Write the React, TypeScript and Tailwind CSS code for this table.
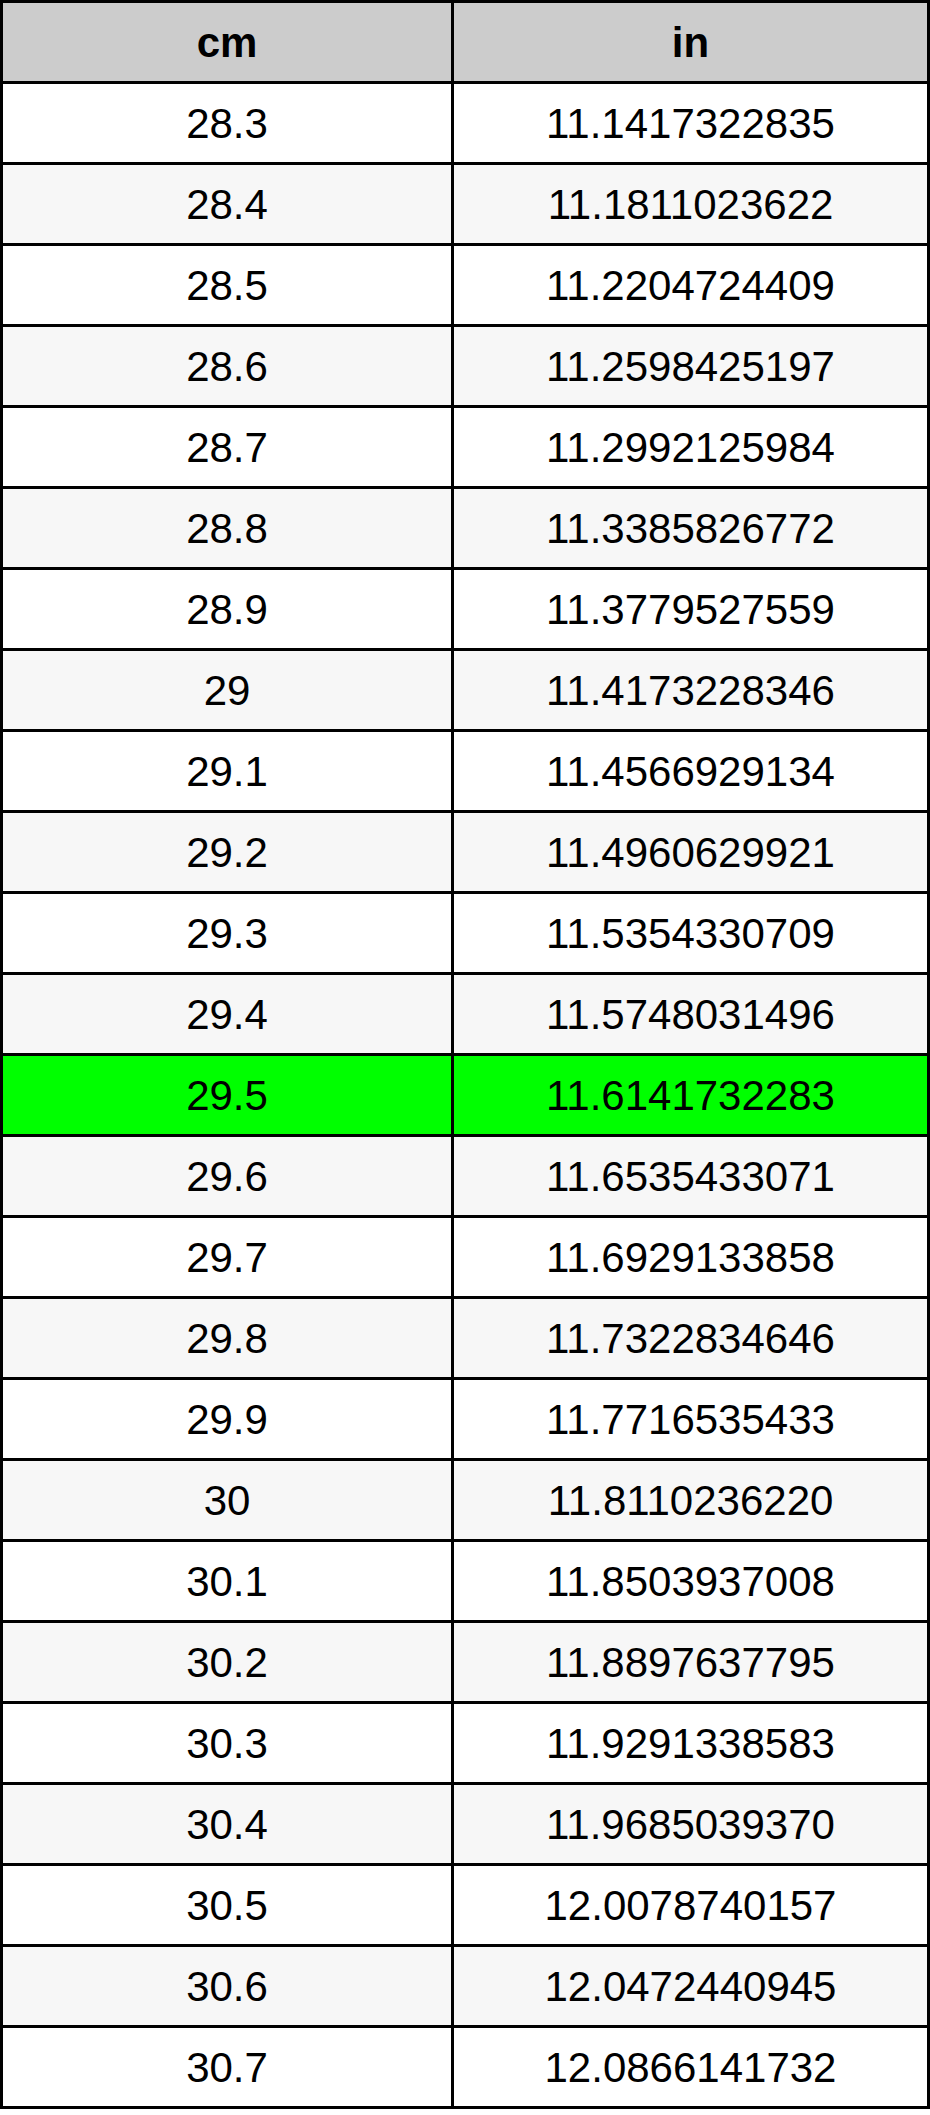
const ROWS: [string, string][] = [
  ["28.3", "11.1417322835"],
  ["28.4", "11.1811023622"],
  ["28.5", "11.2204724409"],
  ["28.6", "11.2598425197"],
  ["28.7", "11.2992125984"],
  ["28.8", "11.3385826772"],
  ["28.9", "11.3779527559"],
  ["29", "11.4173228346"],
  ["29.1", "11.4566929134"],
  ["29.2", "11.4960629921"],
  ["29.3", "11.5354330709"],
  ["29.4", "11.5748031496"],
  ["29.5", "11.6141732283"],
  ["29.6", "11.6535433071"],
  ["29.7", "11.6929133858"],
  ["29.8", "11.7322834646"],
  ["29.9", "11.7716535433"],
  ["30", "11.8110236220"],
  ["30.1", "11.8503937008"],
  ["30.2", "11.8897637795"],
  ["30.3", "11.9291338583"],
  ["30.4", "11.9685039370"],
  ["30.5", "12.0078740157"],
  ["30.6", "12.0472440945"],
  ["30.7", "12.0866141732"],
];

const HIGHLIGHT = "29.5";

function rowBg(cm: string, i: number) {
  if (cm === HIGHLIGHT) return "bg-[#00ff00]";
  return i % 2 === 0 ? "bg-white" : "bg-[#f7f7f7]";
}

export default function App() {
  return (
    <div className="w-[930px] bg-white font-['Liberation_Sans',Arial,sans-serif] text-black">
      <div className="grid grid-cols-[448px_473px] gap-[3px] bg-black p-[3px]">
        {/* header */}
        <div className="h-[78px] bg-[#cccccc] flex items-center justify-center text-[42px] font-bold">
          cm
        </div>
        <div className="h-[78px] bg-[#cccccc] flex items-center justify-center text-[42px] font-bold">
          in
        </div>

        {ROWS.map(([cm, inch], i) => (
          <div key={cm} className="contents">
            <div className={`h-[78px] flex items-center justify-center text-[42px] ${rowBg(cm, i)}`}>
              {cm}
            </div>
            <div className={`h-[78px] flex items-center justify-center text-[42px] ${rowBg(cm, i)}`}>
              {inch}
            </div>
          </div>
        ))}
      </div>
    </div>
  );
}
